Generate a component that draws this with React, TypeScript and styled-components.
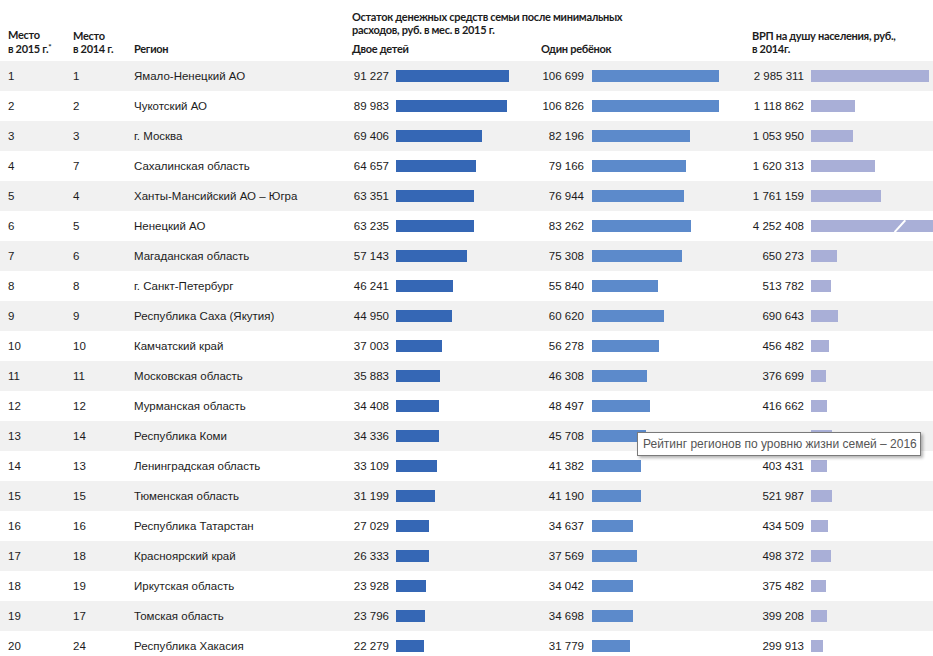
import React from "react";
import styled, { createGlobalStyle } from "styled-components";

const GlobalStyle = createGlobalStyle`
  html, body { margin: 0; padding: 0; background: #ffffff; overflow: hidden; }
  body { font-family: "Liberation Sans", Arial, sans-serif; color: #1c1c1c; }
`;

const COLS = "65px 61px 218px 44px 145px 51px 160px 59px 1fr";

const Page = styled.div`
  position: relative;
  width: 933px;
  height: 656px;
  overflow: hidden;
  background: #ffffff;
`;

const Header = styled.div`
  display: grid;
  grid-template-columns: ${COLS};
  grid-template-rows: auto auto;
  padding: 10px 0 6px 8px;
  height: 61px;
  box-sizing: border-box;
  font-family: Lato, "Liberation Sans Narrow", "DejaVu Sans Condensed", sans-serif;
  font-weight: 700;
  font-size: 11px;
  letter-spacing: -0.3px;
  line-height: 13px;
  color: #1c1c1c;
`;

const HeadCell = styled.div<{ $col: string; $row: string }>`
  grid-column: ${(p) => p.$col};
  grid-row: ${(p) => p.$row};
  align-self: end;
  white-space: nowrap;
`;

const GroupTitle = styled.div`
  grid-column: 4 / 8;
  grid-row: 1;
  align-self: start;
  margin-bottom: 6px;
  white-space: nowrap;
`;

const Star = styled.span`
  font-size: 8px;
  vertical-align: 3px;
`;

const Row = styled.div<{ $shaded: boolean }>`
  display: grid;
  grid-template-columns: ${COLS};
  align-items: center;
  height: 30px;
  padding-left: 8px;
  background: ${(p) => (p.$shaded ? "#f1f1f1" : "#ffffff")};
  font-size: 11.5px;
  color: #1c1c1c;
`;

const Cell = styled.div`
  white-space: nowrap;
`;

const Num = styled.div<{ $pad: number }>`
  text-align: right;
  padding-right: ${(p) => p.$pad}px;
  white-space: nowrap;
`;

const BarCell = styled.div`
  overflow: hidden;
  height: 12px;
`;

const Bar = styled.div<{ $color: string; $broken?: boolean }>`
  position: relative;
  height: 12px;
  background: ${(p) => p.$color};
  &::after {
    content: "";
    display: ${(p) => (p.$broken ? "block" : "none")};
    position: absolute;
    left: 88px;
    top: -2px;
    width: 1.5px;
    height: 16px;
    background: #ffffff;
    transform: rotate(42deg);
  }
`;

const Tooltip = styled.div`
  position: absolute;
  left: 637px;
  top: 432px;
  width: 284px;
  height: 24px;
  box-sizing: border-box;
  padding: 0 0 0 5px;
  display: flex;
  align-items: center;
  border: 1px solid #7a7a7a;
  background: #ffffff;
  box-shadow: 2px 2px 3px rgba(0, 0, 0, 0.3);
  font-family: "Liberation Sans", Arial, sans-serif;
  font-size: 12px;
  color: #555555;
  white-space: nowrap;
`;

type R = [string, string, string, string, string, string];

const rows: R[] = [
  ["1", "1", "Ямало-Ненецкий АО", "91 227", "106 699", "2 985 311"],
  ["2", "2", "Чукотский АО", "89 983", "106 826", "1 118 862"],
  ["3", "3", "г. Москва", "69 406", "82 196", "1 053 950"],
  ["4", "7", "Сахалинская область", "64 657", "79 166", "1 620 313"],
  ["5", "4", "Ханты-Мансийский АО – Югра", "63 351", "76 944", "1 761 159"],
  ["6", "5", "Ненецкий АО", "63 235", "83 262", "4 252 408"],
  ["7", "6", "Магаданская область", "57 143", "75 308", "650 273"],
  ["8", "8", "г. Санкт-Петербург", "46 241", "55 840", "513 782"],
  ["9", "9", "Республика Саха (Якутия)", "44 950", "60 620", "690 643"],
  ["10", "10", "Камчатский край", "37 003", "56 278", "456 482"],
  ["11", "11", "Московская область", "35 883", "46 308", "376 699"],
  ["12", "12", "Мурманская область", "34 408", "48 497", "416 662"],
  ["13", "14", "Республика Коми", "34 336", "45 708", "529 034"],
  ["14", "13", "Ленинградская область", "33 109", "41 382", "403 431"],
  ["15", "15", "Тюменская область", "31 199", "41 190", "521 987"],
  ["16", "16", "Республика Татарстан", "27 029", "34 637", "434 509"],
  ["17", "18", "Красноярский край", "26 333", "37 569", "498 372"],
  ["18", "19", "Иркутская область", "23 928", "34 042", "375 482"],
  ["19", "17", "Томская область", "23 796", "34 698", "399 208"],
  ["20", "24", "Республика Хакасия", "22 279", "31 779", "299 913"],
];

const num = (s: string) => parseInt(s.replace(/\s/g, ""), 10);

export default function App() {
  return (
    <Page>
      <GlobalStyle />
      <Header>
        <HeadCell $col="1" $row="1 / 3">
          Место
          <br />в 2015 г.<Star>*</Star>
        </HeadCell>
        <HeadCell $col="2" $row="1 / 3">
          Место
          <br />в 2014 г.
        </HeadCell>
        <HeadCell $col="3" $row="1 / 3">
          Регион
        </HeadCell>
        <GroupTitle>
          Остаток денежных средств семьи после минимальных
          <br />
          расходов, руб. в мес. в 2015 г.
        </GroupTitle>
        <HeadCell $col="4 / 6" $row="2">
          Двое детей
        </HeadCell>
        <HeadCell $col="6 / 8" $row="2">
          Один ребёнок
        </HeadCell>
        <HeadCell $col="8 / 10" $row="1 / 3">
          ВРП на душу населения, руб.,
          <br />в 2014г.
        </HeadCell>
      </Header>
      {rows.map((r, i) => {
        const w1 = num(r[3]) * 0.001238;
        const w2 = num(r[4]) * 0.00119;
        const w3 = num(r[5]) * 0.0000396;
        return (
          <Row key={i} $shaded={i % 2 === 0}>
            <Cell>{r[0]}</Cell>
            <Cell>{r[1]}</Cell>
            <Cell>{r[2]}</Cell>
            <Num $pad={7}>{r[3]}</Num>
            <BarCell>
              <Bar $color="#3567b5" style={{ width: `${w1}px` }} />
            </BarCell>
            <Num $pad={8}>{r[4]}</Num>
            <BarCell>
              <Bar $color="#5c8acb" style={{ width: `${w2}px` }} />
            </BarCell>
            <Num $pad={7}>{r[5]}</Num>
            <BarCell>
              <Bar
                $color="#a9afd7"
                $broken={w3 > 130}
                style={{ width: `${w3}px` }}
              />
            </BarCell>
          </Row>
        );
      })}
      <Tooltip>Рейтинг регионов по уровню жизни семей – 2016</Tooltip>
    </Page>
  );
}
